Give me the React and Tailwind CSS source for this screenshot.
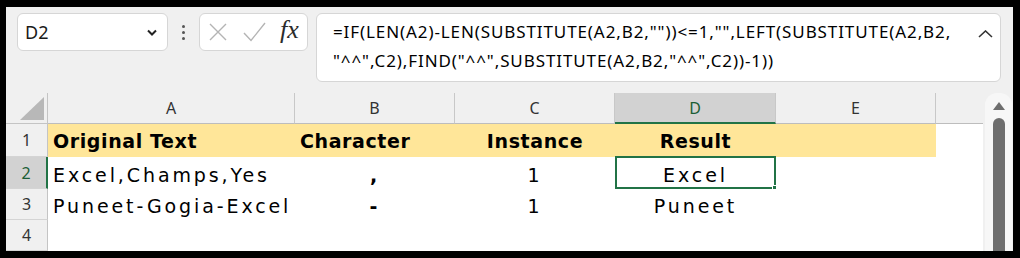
import React from "react";

const cellFont = { fontFamily: '"DejaVu Sans", Verdana, sans-serif' };
const uiFont = { fontFamily: '"Noto Sans", "Open Sans", sans-serif' };

const cols = ["A", "B", "C", "D", "E"];

const rows = [
  { n: 1, h: "h-[33px]", pb: "pb-[5px]", header: true, cells: ["Original Text", "Character", "Instance", "Result", ""] },
  { n: 2, h: "h-[32px]", pb: "pb-[3px]", cells: ["Excel,Champs,Yes", ",", "1", "Excel", ""] },
  { n: 3, h: "h-[31px]", pb: "pb-[3px]", cells: ["Puneet-Gogia-Excel", "-", "1", "Puneet", ""] },
  { n: 4, h: "h-[31px]", pb: "pb-[3px]", cells: ["", "", "", "", ""] },
];

const widths = ["w-[247px]", "w-[160px]", "w-[160px]", "w-[161px]", "w-[160px]"];

function NameBox() {
  return (
    <div className="w-[151px] h-[38px] bg-white border border-[#d6d6d6] rounded-[6px] flex items-center justify-between pl-[7px] pr-[10px]">
      <span className="text-[18px] text-[#1a1a1a]" style={uiFont}>D2</span>
      <svg width="10" height="7" viewBox="0 0 10 7">
        <path d="M1 1.5l4 4 4-4" stroke="#222" strokeWidth="2" fill="none" />
      </svg>
    </div>
  );
}

function FxBox() {
  return (
    <div className="w-[109px] h-[38px] bg-white border border-[#d6d6d6] rounded-[6px] flex items-center pl-[9px] gap-[16px]">
      <svg width="18" height="18" viewBox="0 0 18 18">
        <path d="M1 1L17 17M17 1L1 17" stroke="#b4b4b4" strokeWidth="1.4" fill="none" />
      </svg>
      <svg width="23" height="20" viewBox="0 0 23 20">
        <path d="M1 11L8 18.5L22 1" stroke="#b4b4b4" strokeWidth="1.4" fill="none" />
      </svg>
      <span
        className="italic text-[26px] leading-none text-[#2b2b2b] -mt-[4px] -ml-[2px]"
        style={{ fontFamily: '"Liberation Serif", "Times New Roman", serif' }}
      >
        fx
      </span>
    </div>
  );
}

function FormulaBox() {
  return (
    <div className="flex-1 h-[69px] bg-white border border-[#d6d6d6] rounded-[6px] flex pl-[16px] pr-[7px] pt-[3px]">
      <div className="flex-1 text-[17px] tracking-[0.9px] leading-[29px] text-black whitespace-nowrap" style={uiFont}>
        <div>{'=IF(LEN(A2)-LEN(SUBSTITUTE(A2,B2,""))<=1,"",LEFT(SUBSTITUTE(A2,B2,'}</div>
        <div>{'"^^",C2),FIND("^^",SUBSTITUTE(A2,B2,"^^",C2))-1))'}</div>
      </div>
      <svg width="15" height="8" viewBox="0 0 15 8" className="mt-[13px]">
        <path d="M1 7L7.5 1L14 7" stroke="#333" strokeWidth="1.6" fill="none" />
      </svg>
    </div>
  );
}

function HeaderRow() {
  return (
    <div className="flex h-[31px]">
      <div className="w-[42px] h-full border-r border-b border-[#c4c4c4] flex items-end justify-end pr-[3px] pb-[3px]">
        <svg width="24" height="23" viewBox="0 0 24 23">
          <polygon points="24,0 24,23 0,23" fill="#b8b8b8" />
        </svg>
      </div>
      {cols.map((c, i) => (
        <div
          key={c}
          className={`${widths[i]} h-full flex items-center justify-center text-[16px] border-r border-[#c8c8c8] ${
            c === "D"
              ? "bg-[#d2d2d2] border-b-2 border-b-[#217346] text-[#1b5e36]"
              : "border-b border-b-[#bdbdbd] text-[#333]"
          }`}
          style={uiFont}
        >
          {c}
        </div>
      ))}
      <div className="flex-1 h-full border-b border-[#bdbdbd]" />
    </div>
  );
}

function DataRow({ row }) {
  const selectedRow = row.n === 2;
  return (
    <div className={`flex ${row.h}`}>
      <div
        className={`w-[42px] h-full flex items-center justify-center text-[16px] ${
          selectedRow
            ? "bg-[#d2d2d2] border-r-2 border-r-[#217346] text-[#1b5e36]"
            : "border-r border-r-[#c4c4c4] text-[#333]"
        } border-b border-b-[#d4d4d4]`}
        style={uiFont}
      >
        {row.n}
      </div>
      {row.cells.map((v, i) => {
        const sel = row.n === 2 && i === 3;
        const left = i === 0 || (row.header && i === 1);
        return (
          <div
            key={i}
            className={`${widths[i]} h-full relative flex items-end ${row.pb} ${
              left ? "justify-start pl-[5px]" : "justify-center"
            } ${row.header ? "bg-[#ffe699] font-bold tracking-[0.6px]" : "bg-white tracking-[2.9px]"} ${
              i === 1 && !row.header ? "font-bold" : ""
            } text-[19px] leading-[22px] text-black whitespace-nowrap`}
            style={cellFont}
          >
            {v}
            {sel && (
              <>
                <div className="absolute -top-[1px] left-0 right-0 bottom-0 border-2 border-[#217346]" />
                <div className="absolute -right-[3px] -bottom-[3px] w-[7px] h-[7px] bg-[#217346] border border-white" />
              </>
            )}
          </div>
        );
      })}
      <div className="flex-1 h-full bg-white" />
    </div>
  );
}

function Scrollbar() {
  return (
    <div className="w-[30px] h-full bg-[#f0f0f0] pl-[2px] pr-[1px]">
      <div className="h-full bg-[#f7f7f7] rounded-t-[12px] flex flex-col items-center pt-[9px]">
        <svg width="12" height="8" viewBox="0 0 12 8">
          <polygon points="6,0 12,8 0,8" fill="#6e6e6e" />
        </svg>
        <div className="mt-[8px] w-[12px] flex-1 bg-[#6e6e6e] rounded-t-[6px]" />
      </div>
    </div>
  );
}

export default function App() {
  return (
    <div className="w-[1020px] h-[258px] bg-black pt-[7px] pl-[6px] pr-[7px] pb-[7px]">
      <div className="h-full bg-[#f0f0f0] flex flex-col">
        {/* formula bar */}
        <div className="h-[86px] flex items-start pt-[6px] pl-[11px] pr-[12px]">
          <NameBox />
          <div className="w-[31px] h-[38px] flex flex-col items-center justify-center gap-[3px]">
            <div className="w-[3px] h-[3px] rounded-full bg-[#555]" />
            <div className="w-[3px] h-[3px] rounded-full bg-[#555]" />
            <div className="w-[3px] h-[3px] rounded-full bg-[#555]" />
          </div>
          <FxBox />
          <div className="w-[8px]" />
          <FormulaBox />
        </div>

        {/* grid */}
        <div className="flex-1 flex">
          <div className="flex-1 flex flex-col">
            <HeaderRow />
            {rows.map((r) => (
              <DataRow key={r.n} row={r} />
            ))}
          </div>
          <Scrollbar />
        </div>
      </div>
    </div>
  );
}
